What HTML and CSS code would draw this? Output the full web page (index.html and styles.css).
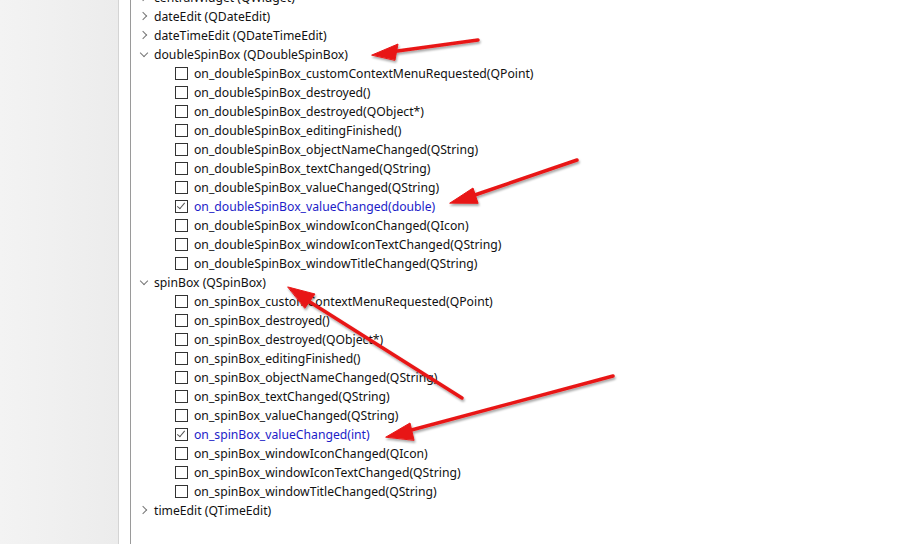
FILE: index.html
```html
<!DOCTYPE html>
<html lang="en">

<head>
    <meta charset="UTF-8" />
    <title>Go to slot</title>
    <link rel="stylesheet" href="styles.css">
</head>

<body>
    <div class="frame">
        <div class="side"></div>
        <div class="gap"></div>

        <div class="tree">
            <div class="row top"><span class="chev closed"></span>centralWidget (QWidget)</div>
            <div class="row top"><span class="chev closed"></span>dateEdit (QDateEdit)</div>
            <div class="row top"><span class="chev closed"></span>dateTimeEdit (QDateTimeEdit)</div>
            <div class="row top"><span class="chev open"></span>doubleSpinBox (QDoubleSpinBox)</div>
            <div class="row slot"><span class="box"></span>on_doubleSpinBox_customContextMenuRequested(QPoint)</div>
            <div class="row slot"><span class="box"></span>on_doubleSpinBox_destroyed()</div>
            <div class="row slot"><span class="box"></span>on_doubleSpinBox_destroyed(QObject*)</div>
            <div class="row slot"><span class="box"></span>on_doubleSpinBox_editingFinished()</div>
            <div class="row slot"><span class="box"></span>on_doubleSpinBox_objectNameChanged(QString)</div>
            <div class="row slot"><span class="box"></span>on_doubleSpinBox_textChanged(QString)</div>
            <div class="row slot"><span class="box"></span>on_doubleSpinBox_valueChanged(QString)</div>
            <div class="row slot checked"><span class="box"></span>on_doubleSpinBox_valueChanged(double)</div>
            <div class="row slot"><span class="box"></span>on_doubleSpinBox_windowIconChanged(QIcon)</div>
            <div class="row slot"><span class="box"></span>on_doubleSpinBox_windowIconTextChanged(QString)</div>
            <div class="row slot"><span class="box"></span>on_doubleSpinBox_windowTitleChanged(QString)</div>
            <div class="row top"><span class="chev open"></span>spinBox (QSpinBox)</div>
            <div class="row slot"><span class="box"></span>on_spinBox_customContextMenuRequested(QPoint)</div>
            <div class="row slot"><span class="box"></span>on_spinBox_destroyed()</div>
            <div class="row slot"><span class="box"></span>on_spinBox_destroyed(QObject*)</div>
            <div class="row slot"><span class="box"></span>on_spinBox_editingFinished()</div>
            <div class="row slot"><span class="box"></span>on_spinBox_objectNameChanged(QString)</div>
            <div class="row slot"><span class="box"></span>on_spinBox_textChanged(QString)</div>
            <div class="row slot"><span class="box"></span>on_spinBox_valueChanged(QString)</div>
            <div class="row slot checked"><span class="box"></span>on_spinBox_valueChanged(int)</div>
            <div class="row slot"><span class="box"></span>on_spinBox_windowIconChanged(QIcon)</div>
            <div class="row slot"><span class="box"></span>on_spinBox_windowIconTextChanged(QString)</div>
            <div class="row slot"><span class="box"></span>on_spinBox_windowTitleChanged(QString)</div>
            <div class="row top"><span class="chev closed"></span>timeEdit (QTimeEdit)</div>
        </div>
    </div>

    <!-- annotation arrows drawn over the screenshot -->
    <svg class="marks" width="907" height="544" viewBox="0 0 907 544">
        <defs>
            <filter id="shadow" x="-20%" y="-50%" width="140%" height="200%">
                <feDropShadow dx="1" dy="2" stdDeviation="1.2" flood-color="#000" flood-opacity="0.35" />
            </filter>
        </defs>
        <g fill="#e81818" stroke="#e81818" stroke-linecap="round" filter="url(#shadow)">
            <line x1="478" y1="40" x2="390" y2="52" stroke-width="3.5" />
            <polygon points="372,55 398,44 395,60" stroke-width="1" />

            <line x1="577" y1="160" x2="466" y2="198" stroke-width="3.5" />
            <polygon points="450,203 473,188 478,203" stroke-width="1" />

            <line x1="462" y1="398" x2="302" y2="297" stroke-width="3.5" />
            <polygon points="288,287 315,294 305,308" stroke-width="1" />

            <line x1="613" y1="376" x2="404" y2="432" stroke-width="3.5" />
            <polygon points="386,437 410,423 414,440" stroke-width="1" />
        </g>
    </svg>
</body>

</html>
```

FILE: styles.css
```css
body {
    margin: 0;
    background: #fff;
    font-family: 'Noto Sans', 'Noto Sans CJK SC', sans-serif;
    font-size: 12.2px;
    color: #111;
    overflow: hidden;
}

.frame {
    display: flex;
    height: 544px;
}

.side {
    width: 118px;
    background: linear-gradient(to right, #f3f3f3, #ececec);
    border-right: 1px solid #d4d4d4;
}

.gap {
    width: 11px;
    background: #fff;
    border-right: 1px solid #9a9a9a;
}

.tree {
    flex: 1;
    margin-top: -12px;
}

.row {
    height: 19px;
    display: flex;
    align-items: center;
    white-space: nowrap;
}

.row.top {
    padding-left: 7px;
}

.row.slot {
    padding-left: 44px;
}

.row.checked {
    color: #1c1cc8;
}

.chev {
    width: 16px;
    height: 19px;
    position: relative;
}

.chev::before {
    content: "";
    position: absolute;
    width: 5px;
    height: 5px;
    border-right: 1.3px solid #777;
    border-bottom: 1.3px solid #777;
}

.chev.closed::before {
    left: 2px;
    top: 6px;
    transform: rotate(-45deg);
}

.chev.open::before {
    left: 3px;
    top: 5px;
    transform: rotate(45deg);
}

.box {
    width: 11px;
    height: 11px;
    border: 1px solid #333;
    margin-right: 6px;
    position: relative;
    background: #fff;
}

.checked .box::after {
    content: "";
    position: absolute;
    left: 3px;
    top: 0px;
    width: 3px;
    height: 7px;
    border-right: 1.2px solid #555;
    border-bottom: 1.2px solid #555;
    transform: rotate(40deg);
}

.marks {
    position: absolute;
    left: 0;
    top: 0;
    pointer-events: none;
}
```
